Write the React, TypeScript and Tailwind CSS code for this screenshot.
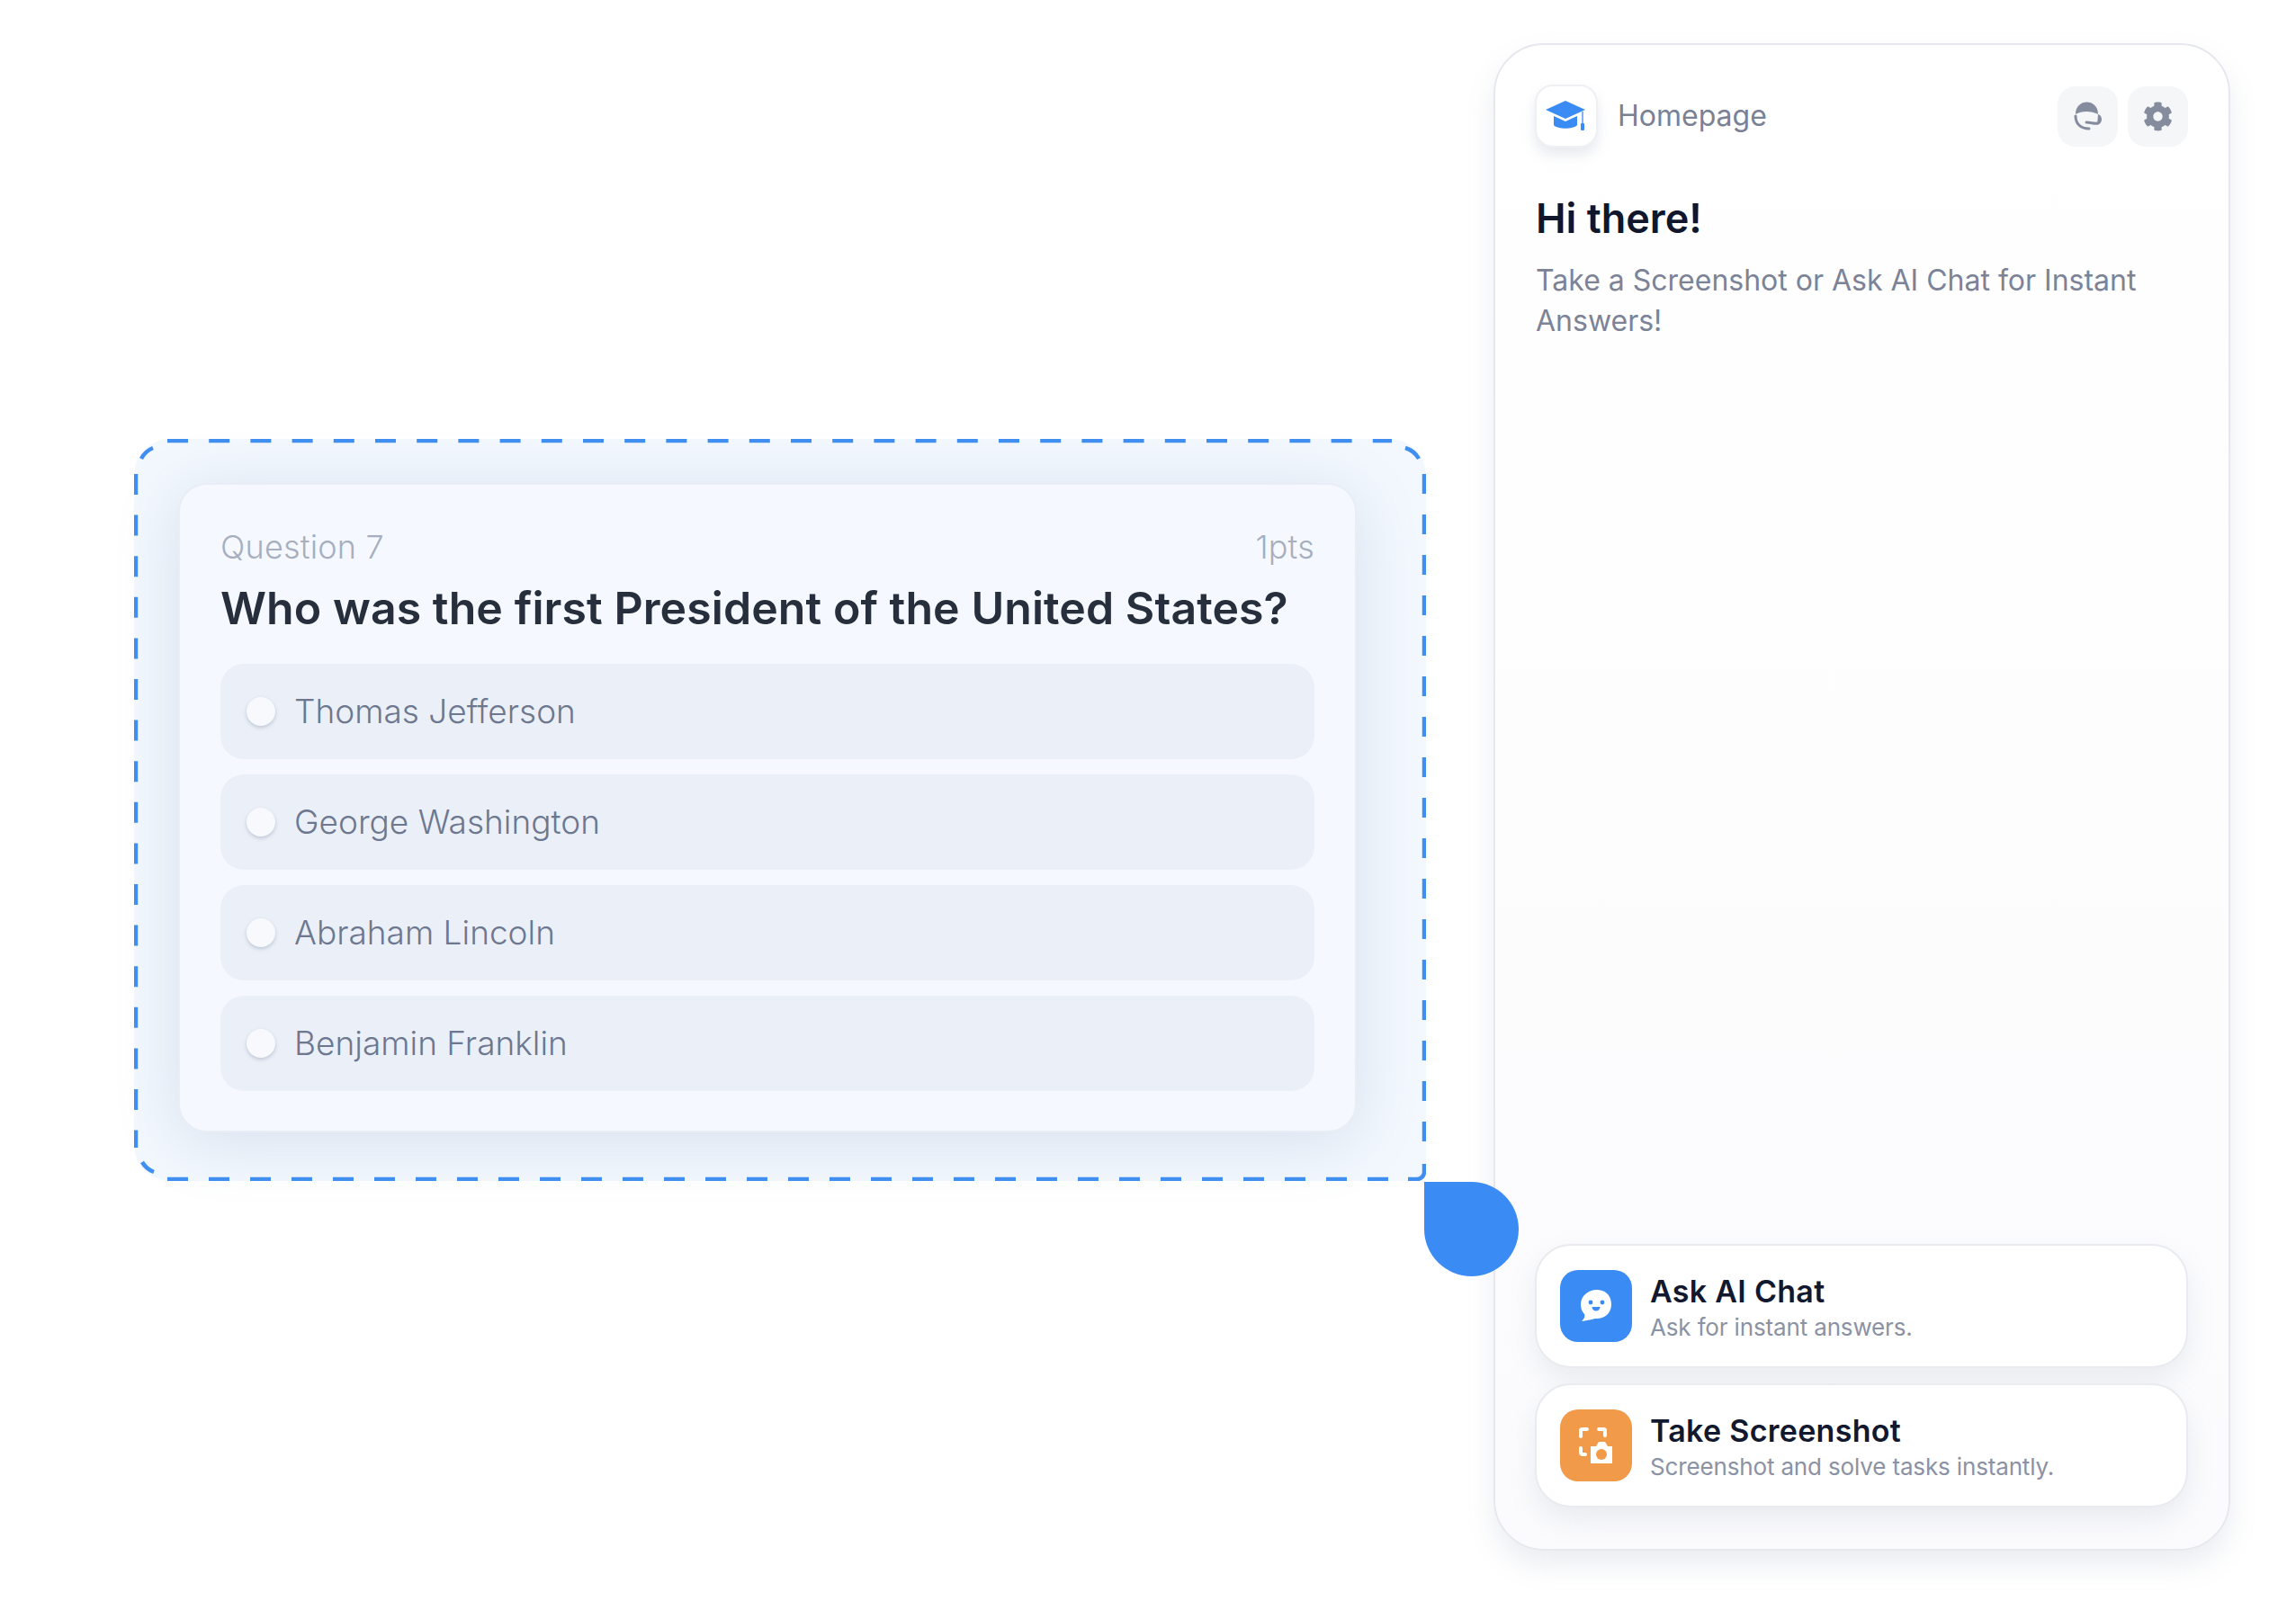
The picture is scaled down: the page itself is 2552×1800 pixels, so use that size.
import React from 'react'
import { FaCog } from 'react-icons/fa'

const answers = ['Thomas Jefferson', 'George Washington', 'Abraham Lincoln', 'Benjamin Franklin']

const CapIcon = () => (
  <svg viewBox="0 0 46 34" className="w-[46px] h-[34px]" fill="#3b8bf5">
    <path d="M22 0 L44 10 L22 20 L0 10 Z" />
    <path d="M9 17 L22 23 L35 17 V27 C31 32 13 32 9 27 Z" />
    <rect x="40" y="12" width="2" height="14" fill="#7fb2f5" />
    <rect x="39" y="25" width="4" height="8" rx="1" />
  </svg>
)

const AgentIcon = () => (
  <svg viewBox="0 0 34 34" className="w-[34px] h-[34px]">
    <path d="M3 15 C3 -3 28 -3 28 15 C20 11 10 11 3 15 Z" fill="#858c9e" />
    <path d="M3 17 C3 25 8 31 18 31" fill="none" stroke="#858c9e" strokeWidth="3" strokeLinecap="round" />
    <path d="M28 15 C33 16 34 25 27 27 Z" fill="#858c9e" />
    <path d="M27 25 C24 26 20 24 15 24" fill="none" stroke="#858c9e" strokeWidth="3" strokeLinecap="round" />
  </svg>
)

const ChatIcon = () => (
  <svg viewBox="0 0 36 38" className="w-[36px] h-[38px]">
    <path d="M19 1 C29 1 35 8 35 17 C35 27 28 33 19 33 C15 33 11 35 2 36 C5 33 6 31 5 28 C2 25 1 21 1 17 C1 8 9 1 19 1 Z" fill="#fff" />
    <circle cx="12" cy="15" r="2.4" fill="#3b8bf5" />
    <circle cx="25" cy="15" r="2.4" fill="#3b8bf5" />
    <path d="M13.5 20 H22.5 C22 26 14 26 13.5 20 Z" fill="#3b8bf5" />
  </svg>
)

const ShotIcon = () => (
  <svg viewBox="0 0 40 42" className="w-[40px] h-[42px]">
    <path d="M3 11 V4 C3 3 4 3 5 3 H10 M23 3 H28 C29 3 30 3 30 4 V10 M3 24 V29 C3 30 4 31 5 31 H8" fill="none" stroke="#fff" strokeWidth="4" strokeLinecap="round" />
    <path d="M14 22 H20 L23 17 H30 L33 22 H38 V41 H14 Z" fill="#fff" />
    <circle cx="26" cy="31" r="6" fill="#f19a4a" />
  </svg>
)

const ActionCard = ({ title, text, color, icon }: { title: string; text: string; color: string; icon: React.ReactNode }) => (
  <div className="flex items-center h-[138px] pl-[26px] bg-white rounded-[40px] border-2 border-[#e9ebf1] shadow-[0_14px_30px_rgba(130,140,165,0.14)]">
    <div className={`flex items-center justify-center w-[80px] h-[80px] rounded-[20px] ${color}`}>{icon}</div>
    <div className="ml-[20px] pt-[3px]">
      <div className="text-[34px] leading-[40px] font-semibold tracking-[0.3px] text-[#12182e]">{title}</div>
      <div className="mt-[4px] text-[26px] leading-[32px] text-[#8b92a4] tracking-[-0.15px]">{text}</div>
    </div>
  </div>
)

const App = () => {
  return (
    <div className="flex w-[2552px] h-[1800px] bg-white font-['Inter',sans-serif]">
      {/* Quiz card with selection frame */}
      <div className="flex-1 pl-[149px] pt-[488px]">
        <div className="relative w-[1436px] h-[825px] pl-[49px] pt-[49px] bg-[#f3f8fe] rounded-[40px] rounded-br-[8px]">
          <div className="h-[722px] w-[1310px] px-[45px] pt-[43px] bg-[#f5f9ff] rounded-[32px] border-2 border-[#e9edf5] shadow-[0_10px_70px_rgba(110,130,170,0.2)]">
            <div className="flex justify-between text-[36px] leading-[52px] font-light tracking-[0.2px] text-[#a7afbe]">
              <span>Question 7</span>
              <span>1pts</span>
            </div>
            <h1 className="mt-[10px] text-[50px] leading-[64px] font-semibold tracking-[0.07px] text-[#272f3c]">
              Who was the first President of the United States?
            </h1>
            <ul className="mt-[30px] flex flex-col gap-[17px]">
              {answers.map((a) => (
                <li key={a} className="flex items-center h-[106px] pl-[29px] bg-[#ebf0f8] rounded-[26px]">
                  <span className="w-[32px] h-[32px] rounded-full bg-[#f7f9fd] shadow-[0_2px_4px_rgba(110,120,145,0.35)]" />
                  <span className="ml-[21px] text-[37px] font-light text-[#6d7890]">{a}</span>
                </li>
              ))}
            </ul>
          </div>
          {/* dashed marquee */}
          <svg className="absolute left-0 top-0 w-[1436px] h-[825px]" fill="none" stroke="#3f8ef0" strokeWidth="4.5">
            <path d="M37 2 H1398" strokeDasharray="23 23.2" />
            <path d="M1434 39 V784" strokeDasharray="22 23" />
            <path d="M37 823 H1394" strokeDasharray="23 23" />
            <path d="M2 39 V788" strokeDasharray="23 22.6" />
            <path d="M8 22 A26 26 0 0 1 21 10" />
            <path d="M1413 10 A26 26 0 0 1 1428 22" />
            <path d="M9 804 A26 26 0 0 0 22 815" />
            <path d="M1434 806 V815 A8 8 0 0 1 1426 823 H1416" />
          </svg>
          {/* cursor drop */}
          <div className="absolute left-full top-full ml-[-2px] mt-[1px] z-10 w-[105px] h-[105px] bg-[#3b8bf5] rounded-tl-[6px] rounded-tr-full rounded-br-full rounded-bl-full" />
        </div>
      </div>

      {/* Side panel */}
      <div className="flex flex-col justify-between w-[819px] h-[1676px] mt-[48px] mr-[73px] pl-[44px] pr-[45px] pt-[44px] pb-[46px] rounded-[56px] border-2 border-[#e6e8ee] bg-gradient-to-b from-white to-[#fbfbfd] shadow-[0_16px_30px_rgba(130,140,165,0.16)]">
        <div>
          <div className="flex items-center">
            <div className="flex items-center justify-center w-[70px] h-[70px] rounded-[20px] bg-white border-2 border-[#eef0f4] shadow-[0_8px_14px_rgba(130,140,165,0.18)]">
              <CapIcon />
            </div>
            <span className="ml-[22px] text-[32px] text-[#7a8194]">Homepage</span>
            <div className="ml-auto flex gap-[11px]">
              <button className="flex items-center justify-center w-[67px] h-[67px] rounded-[20px] bg-[#f5f6f8]">
                <AgentIcon />
              </button>
              <button className="flex items-center justify-center w-[67px] h-[67px] rounded-[20px] bg-[#f5f6f8]">
                <FaCog className="w-[33px] h-[33px] text-[#858c9e]" />
              </button>
            </div>
          </div>
          <h2 className="mt-[51px] ml-[1px] text-[45px] leading-[56px] font-semibold text-[#10162c]">Hi there!</h2>
          <p className="mt-[18px] ml-[1px] text-[32px] leading-[45px] text-[#7c8397]">
            Take a Screenshot or Ask AI Chat for Instant Answers!
          </p>
        </div>
        <div className="flex flex-col gap-[17px]">
          <ActionCard title="Ask AI Chat" text="Ask for instant answers." color="bg-[#3b8bf5]" icon={<ChatIcon />} />
          <ActionCard title="Take Screenshot" text="Screenshot and solve tasks instantly." color="bg-[#f19a4a]" icon={<ShotIcon />} />
        </div>
      </div>
    </div>
  )
}

export default App
